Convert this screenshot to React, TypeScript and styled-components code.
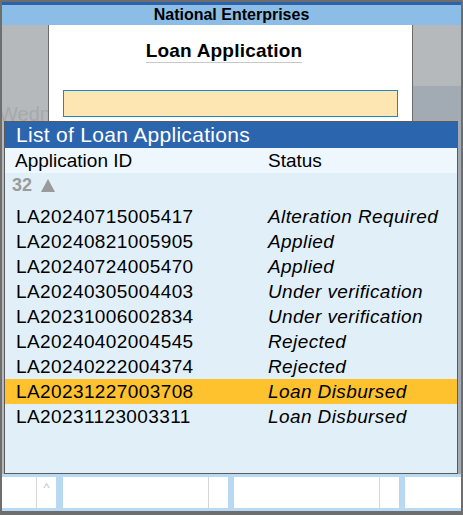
import React from 'react';
import styled, { createGlobalStyle } from 'styled-components';

const Global = createGlobalStyle`
  html, body {
    margin: 0;
    padding: 0;
    background: #ffffff;
  }
  body {
    font-family: "Liberation Sans", Arial, sans-serif;
  }
`;

const Frame = styled.div`
  width: 463px;
  height: 515px;
  box-sizing: border-box;
  border-style: solid;
  border-color: #6e6e6e;
  border-width: 2px 2px 4px 2px;
  display: flex;
  flex-direction: column;
  overflow: hidden;
`;

const TopStrip = styled.div`
  height: 3px;
  background: #2d62aa;
`;

const TitleBar = styled.div`
  height: 20px;
  background: #8bbde6;
  color: #000;
  font-weight: bold;
  font-size: 16px;
  line-height: 20px;
  text-align: center;
`;

const Stage = styled.div`
  position: relative;
  height: 449px;
  display: flex;
`;

const SideCol = styled.div`
  background: #b5b9bc;
  display: flex;
  flex-direction: column;
  overflow: hidden;
`;

const LeftCol = styled(SideCol)`
  width: 46px;
`;

const RightCol = styled(SideCol)`
  width: 48px;
`;

const RightTop = styled.div`
  height: 61px;
  background: #b5b9bc;
`;

const RightLower = styled.div`
  flex: 1;
  background: #a2abb4;
`;

const DayText = styled.div`
  margin-top: 78px;
  margin-left: -3px;
  font-size: 20px;
  line-height: 22px;
  color: #a6a9ac;
  white-space: nowrap;
`;

const Card = styled.div`
  width: 365px;
  box-sizing: border-box;
  background: #ffffff;
  border-left: 1px solid #6b6b6b;
  border-right: 1px solid #6b6b6b;
  display: flex;
  flex-direction: column;
  align-items: flex-start;
`;

const CardTitle = styled.div`
  align-self: center;
  margin: 15px 13px 0 0;
  padding-bottom: 1px;
  font-size: 19px;
  font-weight: bold;
  letter-spacing: 0.2px;
  line-height: 21px;
  color: #000;
  border-bottom: 1px solid #c8c8c8;
`;

const InputBox = styled.div`
  margin: 27px 0 0 14px;
  width: 335px;
  height: 27px;
  box-sizing: border-box;
  background: #fde6b2;
  border: 1px solid #1d88c8;
`;

const Popup = styled.div`
  position: absolute;
  left: 2px;
  top: 96px;
  width: 454px;
  height: 353px;
  box-sizing: border-box;
  border: 1px solid #5b5b5b;
  background: #e1eff9;
  display: flex;
  flex-direction: column;
`;

const PopupHeader = styled.div`
  height: 26px;
  background: #2b65ae;
  color: #ffffff;
  font-size: 21px;
  letter-spacing: 0.3px;
  line-height: 26px;
  padding-left: 11px;
`;

const ColumnHeader = styled.div`
  display: flex;
  height: 25px;
  align-items: center;
  background: #eef7fd;
  padding-left: 10px;
  font-size: 19px;
  color: #000;
`;

const IdHead = styled.div`
  width: 253px;
`;

const CountRow = styled.div`
  display: flex;
  align-items: center;
  gap: 9px;
  height: 24px;
  margin-bottom: 7px;
  padding-left: 7px;
  color: #9a9a9a;
  font-size: 18px;
  font-weight: bold;
`;

const Arrow = styled.svg`
  width: 14px;
  height: 13px;
  fill: #9a9a9a;
`;

const Row = styled.div<{ $active?: boolean }>`
  display: flex;
  height: 25px;
  align-items: center;
  padding-left: 11px;
  background: ${(p) => (p.$active ? '#fec22f' : 'transparent')};
  color: #000;
  font-size: 19px;
  letter-spacing: 0.4px;
`;

const IdCell = styled.div`
  width: 252px;
`;

const StatusCell = styled.div`
  font-style: italic;
`;

const BottomBar = styled.div`
  flex: 1;
  background: #b8d9f1;
  padding: 3px 0;
  box-sizing: border-box;
  display: flex;
`;

const Field = styled.div<{ $w: number; $gap?: number }>`
  width: ${(p) => p.$w}px;
  margin-left: ${(p) => p.$gap ?? 0}px;
  background: #ffffff;
  display: flex;
`;

const FieldMain = styled.div`
  flex: 1;
`;

const FieldSide = styled.div`
  width: 19px;
  border-left: 1px solid #d6d6d6;
  color: #c6c6c6;
  font-size: 13px;
  text-align: center;
  line-height: 22px;
`;

const apps = [
  { id: 'LA20240715005417', status: 'Alteration Required' },
  { id: 'LA20240821005905', status: 'Applied' },
  { id: 'LA20240724005470', status: 'Applied' },
  { id: 'LA20240305004403', status: 'Under verification' },
  { id: 'LA20231006002834', status: 'Under verification' },
  { id: 'LA20240402004545', status: 'Rejected' },
  { id: 'LA20240222004374', status: 'Rejected' },
  { id: 'LA20231227003708', status: 'Loan Disbursed' },
  { id: 'LA20231123003311', status: 'Loan Disbursed' },
];

const App = () => (
  <Frame>
    <Global />
    <TopStrip />
    <TitleBar>National Enterprises</TitleBar>
    <Stage>
      <LeftCol>
        <DayText>Wednesday</DayText>
      </LeftCol>
      <Card>
        <CardTitle>Loan Application</CardTitle>
        <InputBox />
      </Card>
      <RightCol>
        <RightTop />
        <RightLower />
      </RightCol>

      <Popup>
        <PopupHeader>List of Loan Applications</PopupHeader>
        <ColumnHeader>
          <IdHead>Application ID</IdHead>
          <div>Status</div>
        </ColumnHeader>
        <CountRow>
          <span>32</span>
          <Arrow viewBox="0 0 14 13">
            <polygon points="7,0 14,13 0,13" />
          </Arrow>
        </CountRow>
        {apps.map((a) => (
          <Row key={a.id} $active={a.id === 'LA20231227003708'}>
            <IdCell>{a.id}</IdCell>
            <StatusCell>{a.status}</StatusCell>
          </Row>
        ))}
      </Popup>
    </Stage>
    <BottomBar>
      <Field $w={54}>
        <FieldMain />
        <FieldSide>^</FieldSide>
      </Field>
      <Field $w={165} $gap={7}>
        <FieldMain />
        <FieldSide />
      </Field>
      <Field $w={165} $gap={6}>
        <FieldMain />
        <FieldSide />
      </Field>
      <Field $w={56} $gap={6}>
        <FieldMain />
      </Field>
    </BottomBar>
  </Frame>
);

export default App;
